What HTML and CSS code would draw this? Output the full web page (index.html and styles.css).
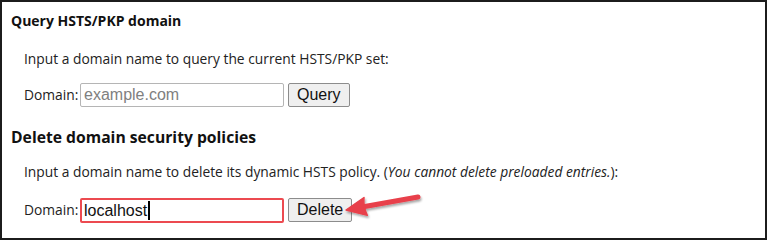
FILE: index.html
```html
<!DOCTYPE html>
<html lang="en">
<head>
  <meta charset="UTF-8">
  <title>HSTS/PKP domain</title>
  <link rel="stylesheet" href="styles.css">
</head>
<body>
  <div class="frame">
    <!-- Query section -->
    <h4 class="section-title">Query HSTS/PKP domain</h4>
    <p class="hint">Input a domain name to query the current HSTS/PKP set:</p>
    <div class="form-row">
      <label class="label">Domain:</label>
      <input class="field" type="text" placeholder="example.com">
      <button class="btn" type="button">Query</button>
    </div>

    <!-- Delete section -->
    <h3 class="section-title big">Delete domain security policies</h3>
    <p class="hint">Input a domain name to delete its dynamic HSTS policy. (<i>You cannot delete preloaded entries.</i>):</p>
    <div class="form-row last">
      <label class="label">Domain:</label>
      <div class="field focused">localhost<span class="caret"></span></div>
      <button class="btn" type="button">Delete</button>
    </div>

    <!-- callout arrow -->
    <svg class="callout" width="90" height="40" viewBox="0 0 90 40">
      <defs>
        <filter id="sh" x="-20%" y="-40%" width="140%" height="180%">
          <feDropShadow dx="1" dy="2" stdDeviation="1.2" flood-color="#000" flood-opacity="0.35"/>
        </filter>
      </defs>
      <g filter="url(#sh)" fill="#e8414b" stroke="#e8414b" stroke-linecap="round" stroke-linejoin="round">
        <line x1="22" y1="19" x2="78" y2="9" stroke-width="5"/>
        <path d="M6 22 L24 9.5 Q23 18.4 27.3 27.3 Z" stroke-width="1.5"/>
      </g>
    </svg>
  </div>
</body>
</html>
```

FILE: styles.css
```css
* { box-sizing: border-box; margin: 0; padding: 0; }
body {
  font-family: "Open Sans", "Noto Sans", sans-serif;
  color: #222;
  background: #fff;
}
.frame {
  position: relative;
  width: 767px;
  height: 240px;
  border: 2px solid #1c1c1c;
  padding: 10px 9px 0;
}

.section-title { font-size: 14px; font-weight: bold; line-height: 18px; color: #111; }
.section-title.big { font-size: 15.7px; line-height: 22px; margin-top: 19px; }

.hint {
  font-size: 13.8px;
  line-height: 20px;
  margin: 19px 0 0 13px;
}
.section-title.big + .hint { margin-top: 14px; }

.form-row {
  display: flex;
  align-items: flex-start;
  gap: 4px;
  margin: 14px 0 0 13px;
}
.form-row.last { margin-top: 16px; }
.label {
  width: 52px;
  font-size: 13.8px;
  line-height: 24px;
  white-space: nowrap;
}

.field {
  width: 204px;
  height: 24px;
  border: 1px solid #b5b5b5;
  border-radius: 2px;
  padding: 0 3px;
  font-family: "Liberation Sans", Arial, sans-serif;
  font-size: 16px;
  color: #111;
  line-height: 22px;
  display: flex;
  align-items: center;
}
.field::placeholder { color: #808080; }
.field.focused {
  border: 2px solid #ec4a50;
  height: 25px;
  padding: 0 2px;
}
.caret {
  display: inline-block;
  width: 2px;
  height: 19px;
  background: #000;
  margin-left: 1px;
}

.btn {
  height: 24px;
  padding: 0 8px;
  border: 1px solid #8c8c8c;
  border-radius: 2px;
  background: #efefef;
  font-family: "Liberation Sans", Arial, sans-serif;
  font-size: 16px;
  color: #111;
}

.callout {
  position: absolute;
  left: 338px;
  top: 186px;
}
```
